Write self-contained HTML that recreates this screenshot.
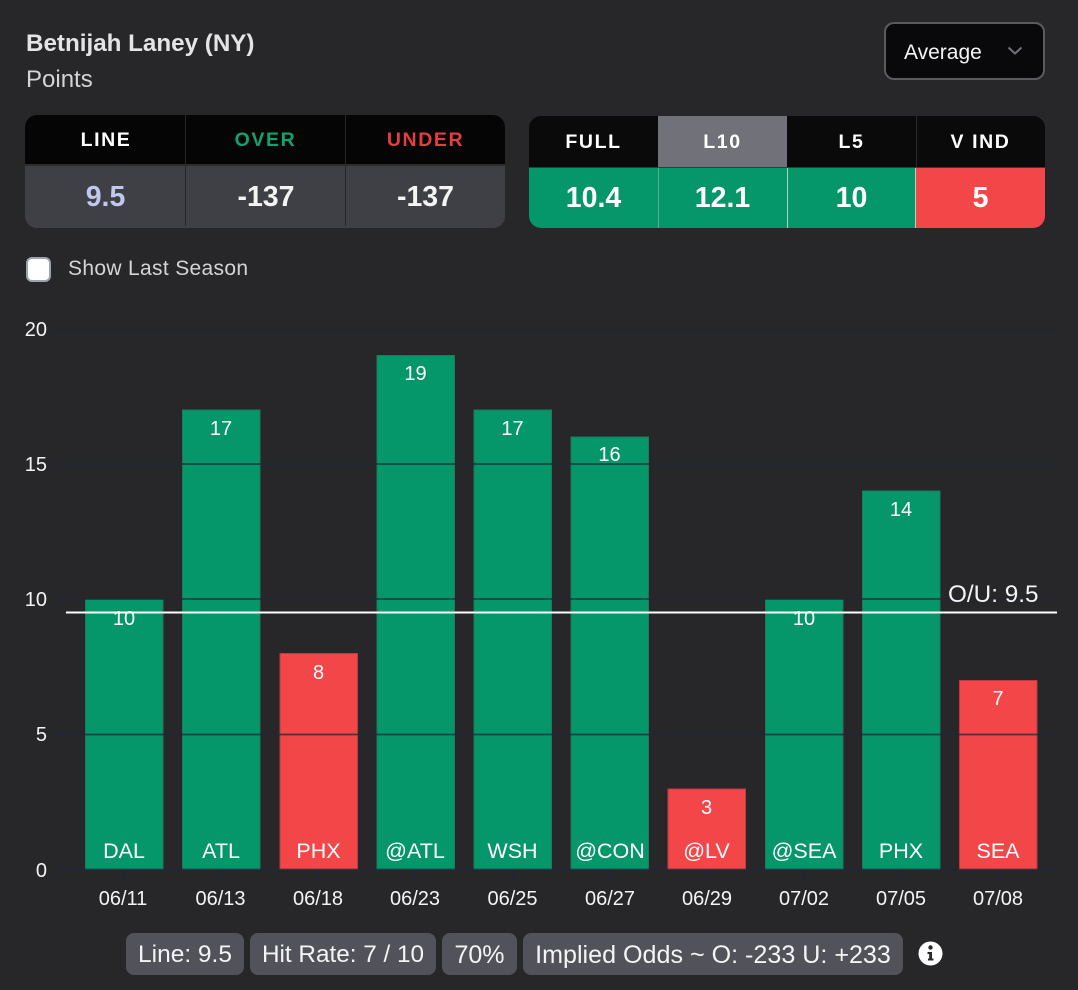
<!DOCTYPE html>
<html><head><meta charset="utf-8">
<style>
html,body{margin:0;padding:0;background:#27272a;width:1078px;height:990px;overflow:hidden}
body{font-family:"Liberation Sans",sans-serif;position:relative;color:#fff}
.a{position:absolute}
.c{position:absolute;text-align:center}
.hd{font-weight:700;font-size:19.5px;letter-spacing:1.6px;line-height:20px}
.val{font-weight:700;font-size:28.5px;line-height:30px}
.pill{position:absolute;top:933px;height:42px;background:#52525b;border-radius:8px;line-height:44px;text-align:center;color:#f4f4f5;white-space:nowrap}
</style></head><body>
<div class="a" style="left:26px;top:30px;font-size:24.2px;font-weight:700;line-height:27px;color:#e4e4e7;white-space:nowrap">Betnijah Laney (NY)</div>
<div class="a" style="left:26px;top:66px;font-size:24px;line-height:28px;color:#d4d4d8">Points</div>

<div class="a" style="left:884px;top:22px;width:157px;height:54px;background:#09090b;border:2px solid #5a5a63;border-radius:10px"></div>
<div class="a" style="left:904px;top:40px;font-size:21px;line-height:26px;color:#f4f4f5">Average</div>
<svg class="a" style="left:1005px;top:44px" width="20" height="14" viewBox="0 0 20 14"><path d="M3.5 3.5 L10 9.5 L16.5 3.5" fill="none" stroke="#71717a" stroke-width="2"/></svg>

<!-- left table -->
<div class="a" style="left:25px;top:115px;width:480px;height:113px;border-radius:12px;overflow:hidden;background:#3f3f46">
  <div class="a" style="left:0;top:0;width:480px;height:49px;background:#050506"></div>
  <div class="a" style="left:0;top:49px;width:480px;height:2px;background:#2c2c30"></div>
  <div class="a" style="left:160px;top:0;width:1px;height:111px;background:#27272a"></div>
  <div class="a" style="left:320px;top:0;width:1px;height:111px;background:#27272a"></div>
  <div class="c hd" style="left:0;width:162px;top:15px">LINE</div>
  <div class="c hd" style="left:161px;width:159px;top:15px;color:#10a272">OVER</div>
  <div class="c hd" style="left:321px;width:159px;top:15px;color:#e53e3e">UNDER</div>
  <div class="c val" style="left:0;width:161px;top:67px;color:#c1c8ee">9.5</div>
  <div class="c val" style="left:161px;width:160px;top:67px;color:#f4f4f5">-137</div>
  <div class="c val" style="left:321px;width:159px;top:67px;color:#f4f4f5">-137</div>
</div>

<!-- right table -->
<div class="a" style="left:529px;top:116px;width:516px;height:112px;border-radius:12px;overflow:hidden;background:#0a0a0b">
  <div class="a" style="left:129px;top:0;width:129px;height:51px;background:#71717a"></div>
  <div class="a" style="left:0;top:51px;width:516px;height:1px;background:#3a3a3e"></div>
  <div class="a" style="left:0;top:52px;width:387px;height:60px;background:#059669"></div>
  <div class="a" style="left:387px;top:52px;width:129px;height:60px;background:#f34648"></div>
  <div class="a" style="left:129px;top:52px;width:1px;height:60px;background:#4fb093"></div>
  <div class="a" style="left:258px;top:52px;width:1px;height:60px;background:#a5d8c6"></div>
  <div class="a" style="left:386px;top:52px;width:1px;height:60px;background:#a5d8c6"></div>
  <div class="a" style="left:387px;top:0;width:1px;height:51px;background:#2a2a2d"></div>
  <div class="c hd" style="left:0;width:129px;top:16px">FULL</div>
  <div class="c hd" style="left:129px;width:129px;top:16px">L10</div>
  <div class="c hd" style="left:258px;width:129px;top:16px">L5</div>
  <div class="c hd" style="left:387px;width:129px;top:16px">V IND</div>
  <div class="c val" style="left:0;width:129px;top:67px">10.4</div>
  <div class="c val" style="left:129px;width:129px;top:67px">12.1</div>
  <div class="c val" style="left:258px;width:129px;top:67px">10</div>
  <div class="c val" style="left:387px;width:129px;top:67px">5</div>
</div>

<!-- checkbox -->
<div class="a" style="left:26px;top:257px;width:21px;height:21px;background:#fff;border:2px solid #9ca3af;border-radius:6px"></div>
<div class="a" style="left:68px;top:256px;font-size:21px;line-height:26px;letter-spacing:.33px;color:#d4d4d8;white-space:nowrap">Show Last Season</div>

<!-- chart -->
<svg class="a" style="left:0;top:0" width="1078" height="990" viewBox="0 0 1078 990" font-family="Liberation Sans, sans-serif">
  <g fill="#059669" stroke="#1d7a5f" stroke-width="1">
    <rect x="85.5" y="599.5" width="77.5" height="270"/>
    <rect x="182.5" y="410" width="77.5" height="459.5"/>
    <rect x="377" y="355.5" width="77.5" height="514"/>
    <rect x="474" y="410" width="77.5" height="459.5"/>
    <rect x="571" y="437" width="77.5" height="432.5"/>
    <rect x="765.5" y="599.5" width="77.5" height="270"/>
    <rect x="862.5" y="491" width="77.5" height="378.5"/>
  </g>
  <g fill="#f34648" stroke="#b83c42" stroke-width="1">
    <rect x="280" y="653.5" width="77.5" height="216"/>
    <rect x="668" y="789" width="77.5" height="80.5"/>
    <rect x="959.5" y="680.5" width="77.5" height="189"/>
  </g>
  <g stroke="#1f2937" stroke-width="1.8" opacity=".75">
    <line x1="53" x2="1057" y1="329.5" y2="329.5" opacity=".7"/>
    <line x1="53" x2="1057" y1="464" y2="464"/>
    <line x1="53" x2="1057" y1="599" y2="599"/>
    <line x1="53" x2="1057" y1="734.5" y2="734.5"/>
    <line x1="53" x2="1057" y1="869.5" y2="869.5"/>
    <line x1="124" x2="124" y1="870" y2="880"/><line x1="221" x2="221" y1="870" y2="880"/>
    <line x1="318" x2="318" y1="870" y2="880"/><line x1="415.5" x2="415.5" y1="870" y2="880"/>
    <line x1="513" x2="513" y1="870" y2="880"/><line x1="610" x2="610" y1="870" y2="880"/>
    <line x1="707" x2="707" y1="870" y2="880"/><line x1="804" x2="804" y1="870" y2="880"/>
    <line x1="901" x2="901" y1="870" y2="880"/><line x1="998" x2="998" y1="870" y2="880"/>
  </g>
  <line x1="66" x2="1057" y1="612.5" y2="612.5" stroke="#fff" stroke-width="2"/>
  <g fill="#f4f4f5" font-size="20" text-anchor="end">
    <text x="47" y="336">20</text><text x="47" y="471">15</text><text x="47" y="606">10</text><text x="47" y="741">5</text><text x="47" y="877">0</text>
  </g>
  <g fill="#f4f4f5" font-size="20" text-anchor="middle">
    <text x="123" y="905">06/11</text><text x="220.5" y="905">06/13</text><text x="318" y="905">06/18</text><text x="415" y="905">06/23</text><text x="512.5" y="905">06/25</text><text x="610" y="905">06/27</text><text x="707" y="905">06/29</text><text x="804" y="905">07/02</text><text x="901" y="905">07/05</text><text x="998" y="905">07/08</text>
  </g>
  <g fill="#fff" font-size="20" text-anchor="middle">
    <text x="124" y="625">10</text><text x="221" y="435">17</text><text x="318.5" y="679">8</text><text x="415.5" y="380">19</text><text x="512.5" y="435">17</text><text x="609.5" y="461">16</text><text x="706.5" y="814">3</text><text x="804" y="625">10</text><text x="901" y="516">14</text><text x="998" y="705">7</text>
  </g>
  <g fill="#fff" font-size="21.5" text-anchor="middle">
    <text x="124" y="858">DAL</text><text x="221" y="858">ATL</text><text x="318.5" y="858">PHX</text><text x="415" y="858">@ATL</text><text x="512.5" y="858">WSH</text><text x="610" y="858">@CON</text><text x="706.5" y="858">@LV</text><text x="804" y="858">@SEA</text><text x="901" y="858">PHX</text><text x="998" y="858">SEA</text>
  </g>
  <text x="948" y="602" fill="#f4f4f5" font-size="24.3">O/U: 9.5</text>
</svg>

<!-- pills -->
<div class="pill" style="left:126px;width:118px;font-size:24.5px">Line: 9.5</div>
<div class="pill" style="left:250px;width:186px;font-size:24.3px">Hit Rate: 7 / 10</div>
<div class="pill" style="left:442px;width:75px;font-size:25px">70%</div>
<div class="pill" style="left:523px;width:380px;font-size:25.1px">Implied Odds ~ O: -233 U: +233</div>
<svg class="a" style="left:918px;top:941px" width="25" height="25" viewBox="0 0 25 25">
  <circle cx="12.5" cy="12.5" r="12" fill="#fff"/>
  <circle cx="12.5" cy="6.5" r="2.2" fill="#27272a"/>
  <path d="M9.5 11 H14 V17.5 H15.5 V19.5 H10 V17.5 H11.2 V13 H9.5 Z" fill="#27272a"/>
</svg>
</body></html>
